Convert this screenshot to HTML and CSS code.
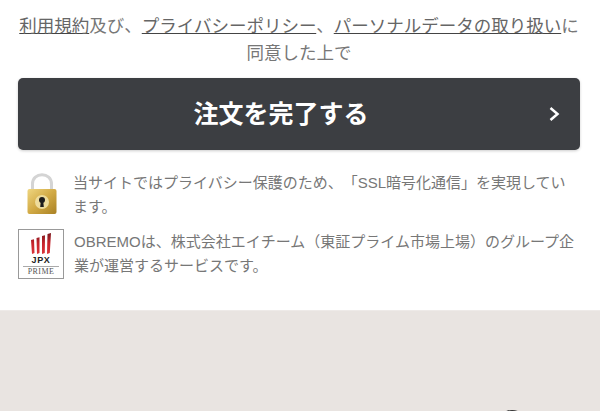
FILE: index.html
```html
<!DOCTYPE html>
<html lang="ja">
<head>
<meta charset="utf-8">
<title>注文を完了する</title>
<link rel="stylesheet" href="styles.css">
</head>
<body>
<main class="order">
  <p class="consent"><a href="#">利用規約</a>及び、<a href="#">プライバシーポリシー</a>、<a href="#">パーソナルデータの取り扱い</a>に<br>同意した上で</p>
  <button class="submit" type="button">
    <span class="submit-label">注文を完了する</span>
    <svg class="chevron" viewBox="0 0 16 16" width="16" height="16" aria-hidden="true"><path d="M6.500 2 L13.500 8 L6.500 14" fill="none" stroke="#fff" stroke-width="2.500"/></svg>
  </button>
  <div class="notes">
    <div class="note note-ssl">
      <svg class="lock" viewBox="0 0 30 44" width="30" height="44" aria-hidden="true">
        <defs>
          <linearGradient id="lock-body" x1="0" y1="0" x2="1" y2="1"><stop offset="0" stop-color="#efd680"/><stop offset=".5" stop-color="#d2aa45"/><stop offset="1" stop-color="#a98124"/></linearGradient>
        </defs>
        <path d="M5.500 18 V11 C5.500 5 10 1.800 15 1.800 C20 1.800 24.500 5 24.500 11 V18" fill="none" stroke="#d4d4d4" stroke-width="3"/>
        <rect x="0.500" y="16" width="29" height="25" rx="2" fill="url(#lock-body)"/>
        <circle cx="15" cy="29" r="7" fill="#eedc9c"/>
        <circle cx="15" cy="27" r="3" fill="#1d1d1d"/>
        <path d="M13.800 28 H16.200 L16.800 34 H13.200 Z" fill="#1d1d1d"/>
      </svg>
      <p class="note-text">当サイトではプライバシー保護のため、「SSL暗号化通信」を実現しています。</p>
    </div>
    <div class="note">
      <div class="jpx">
        <svg class="jpx-mark" viewBox="0 0 22 21" width="22" height="21" aria-hidden="true">
          <defs>
            <linearGradient id="jpx-red" x1="0" y1="0" x2="0" y2="1"><stop offset="0" stop-color="#7a1a20"/><stop offset=".5" stop-color="#c8242c"/><stop offset="1" stop-color="#d9343a"/></linearGradient>
          </defs>
          <path d="M1 7 L4 6.200 L4.500 20 L2 21 Z M6.500 5 L9.500 4.200 L9.500 20 L7 21 Z M12 3 L15 2.200 L14.800 20 L12 21 Z M17.500 1 L21 0 L19.800 20 L17 21 Z" fill="url(#jpx-red)"/>
        </svg>
        <span class="jpx-name">JPX</span>
        <span class="jpx-prime">PRIME</span>
      </div>
      <p class="note-text">OBREMOは、株式会社エイチーム（東証プライム市場上場）のグループ企業が運営するサービスです。</p>
    </div>
  </div>
</main>
<footer class="foot"><span class="foot-arc"></span></footer>
</body>
</html>
```

FILE: styles.css
```css
* { box-sizing: border-box; }
html, body { margin: 0; padding: 0; }
body {
  width: 600px;
  height: 411px;
  overflow: hidden;
  background: #fff;
  font-family: "Liberation Sans", "Noto Sans CJK JP", sans-serif;
  color: #777;
  text-spacing-trim: space-all;
}
p { margin: 0; }
.order { height: 310px; padding: 13px 20px 0 18px; }
.consent {
  font-size: 17.5px;
  line-height: 27px;
  text-align: center;
  color: #777;
  white-space: nowrap;
}
.consent a { color: #666; text-decoration: underline; text-decoration-color: #444; }
.submit {
  display: flex;
  align-items: center;
  width: 100%;
  height: 72px;
  margin-top: 11px;
  padding: 0 20px 0 0;
  border: 0;
  border-radius: 5px;
  background: #3c3e42;
  box-shadow: 0 1px 3px rgba(0,0,0,.2);
  color: #fff;
  font-family: inherit;
}
.submit-label { flex: 1; text-align: center; font-size: 25px; font-weight: 700; line-height: 32px; }
.chevron { flex: none; }
.notes { margin-top: 21px; display: flex; flex-direction: column; gap: 10px; }
.note { display: flex; align-items: center; gap: 10px; }
.note-ssl { padding-left: 9px; gap: 16px; }
.lock { flex: none; }
.note-text { font-size: 15px; line-height: 24px; color: #777; }
.jpx {
  flex: none;
  width: 46px;
  height: 50px;
  border: 1px solid #999;
  background: #fff;
  display: flex;
  flex-direction: column;
  align-items: center;
  padding-top: 3px;
}
.jpx-mark { display: block; }
.jpx-name { font-size: 9px; line-height: 10px; font-weight: 700; color: #222; letter-spacing: .6px; border-bottom: 1px solid #aaa; width: 36px; text-align: center; padding-bottom: 1px; margin-top: 1px; }
.jpx-prime { font-family: "Liberation Serif", serif; font-size: 8px; line-height: 10px; color: #555; letter-spacing: .4px; }
.foot { position: relative; height: 101px; background: #e9e4e1; border-top: 1px solid #eeeae8; overflow: hidden; }
.foot-arc { position: absolute; left: 496px; top: 99px; width: 32px; height: 32px; border-radius: 50%; background: #333; }
```
